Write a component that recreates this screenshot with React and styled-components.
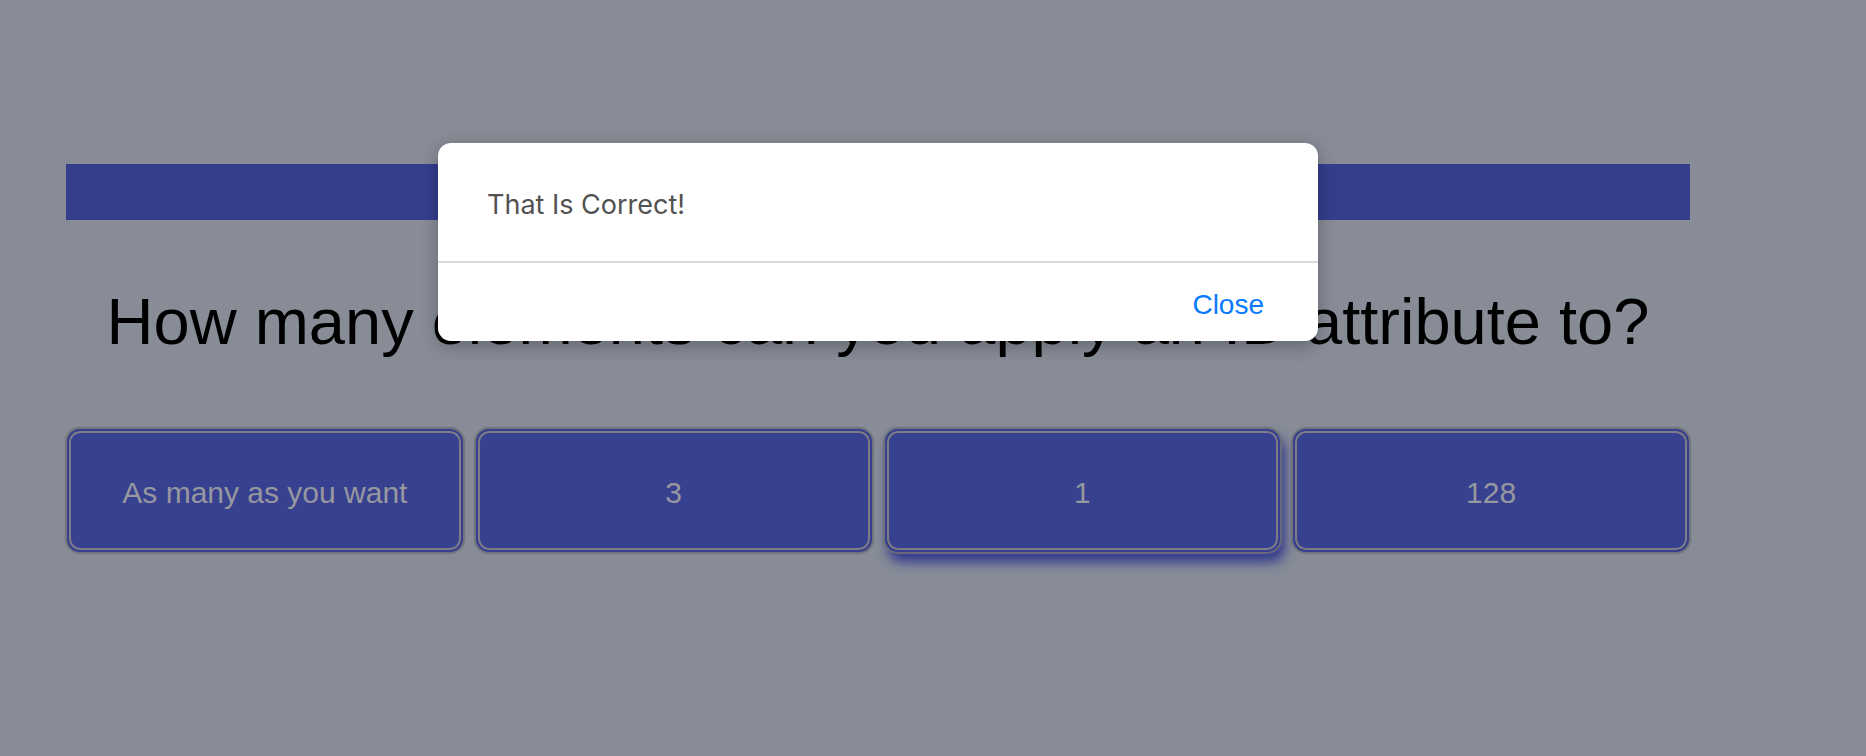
import React from 'react';
import styled, { createGlobalStyle } from 'styled-components';

const GlobalStyle = createGlobalStyle`
  html, body {
    margin: 0;
    padding: 0;
    background: #878c97;
  }

  body {
    font-family: "Liberation Sans", Arial, sans-serif;
  }
`;

const Page = styled.div`
  position: relative;
  width: 1866px;
  height: 756px;
  overflow: hidden;
  box-sizing: border-box;
  padding: 164px 0 0 66px;
`;

const Quiz = styled.main`
  width: 1624px;
`;

const ProgressBar = styled.div`
  height: 56px;
  background: #343e8d;
`;

const Question = styled.h1`
  margin: 64px 0 0;
  font-family: "Liberation Sans", Arial, sans-serif;
  font-size: 65px;
  font-weight: 400;
  line-height: normal;
  text-align: center;
  color: #000;
`;

const Options = styled.div`
  display: flex;
  gap: 13px;
  margin-top: 70px;
  padding: 0 1px;
`;

const Option = styled.button`
  flex: 1;
  height: 123px;
  box-sizing: border-box;
  padding: 4px 0 0;
  border: 2px solid #373f8f;
  border-radius: 13px;
  background: #374190;
  color: #9797a0;
  font-family: "Liberation Sans", Arial, sans-serif;
  font-size: 30px;
  cursor: pointer;
  box-shadow: inset 0 0 0 2px #7c7d86,
    0 0 1px 2px rgba(110, 112, 120, 0.9)
    ${(p) => (p.$raised ? ', 4px 9px 12px 1px rgba(44, 52, 140, 0.95)' : '')};
`;

const Modal = styled.div`
  position: absolute;
  left: 438px;
  top: 143px;
  width: 880px;
  background: #fff;
  border-radius: 13px;
  box-shadow: 0 5px 18px rgba(0, 0, 0, 0.28);
  overflow: hidden;
`;

const ModalBody = styled.div`
  height: 120px;
  box-sizing: border-box;
  display: flex;
  align-items: center;
  padding: 5px 49px 0;
  border-bottom: 2px solid #d8d8da;
  font-family: Inter, "Noto Sans", sans-serif;
  font-size: 27px;
  color: #525252;
`;

const ModalFooter = styled.div`
  height: 78px;
  box-sizing: border-box;
  display: flex;
  align-items: center;
  justify-content: flex-end;
  padding: 6px 54px 0;
`;

const CloseButton = styled.button`
  border: none;
  background: none;
  padding: 0;
  font-family: "Liberation Sans", Arial, sans-serif;
  font-size: 28px;
  color: #0a7bff;
  cursor: pointer;
`;

const answers = ['As many as you want', '3', '1', '128'];

export default function App() {
  return (
    <>
      <GlobalStyle />
      <Page>
        <Quiz>
          <ProgressBar />
          <Question>How many elements can you apply an ID attribute to?</Question>
          <Options>
            {answers.map((a, i) => (
              <Option key={a} $raised={i === 2}>
                {a}
              </Option>
            ))}
          </Options>
        </Quiz>

        <Modal>
          <ModalBody>That Is Correct!</ModalBody>
          <ModalFooter>
            <CloseButton>Close</CloseButton>
          </ModalFooter>
        </Modal>
      </Page>
    </>
  );
}
